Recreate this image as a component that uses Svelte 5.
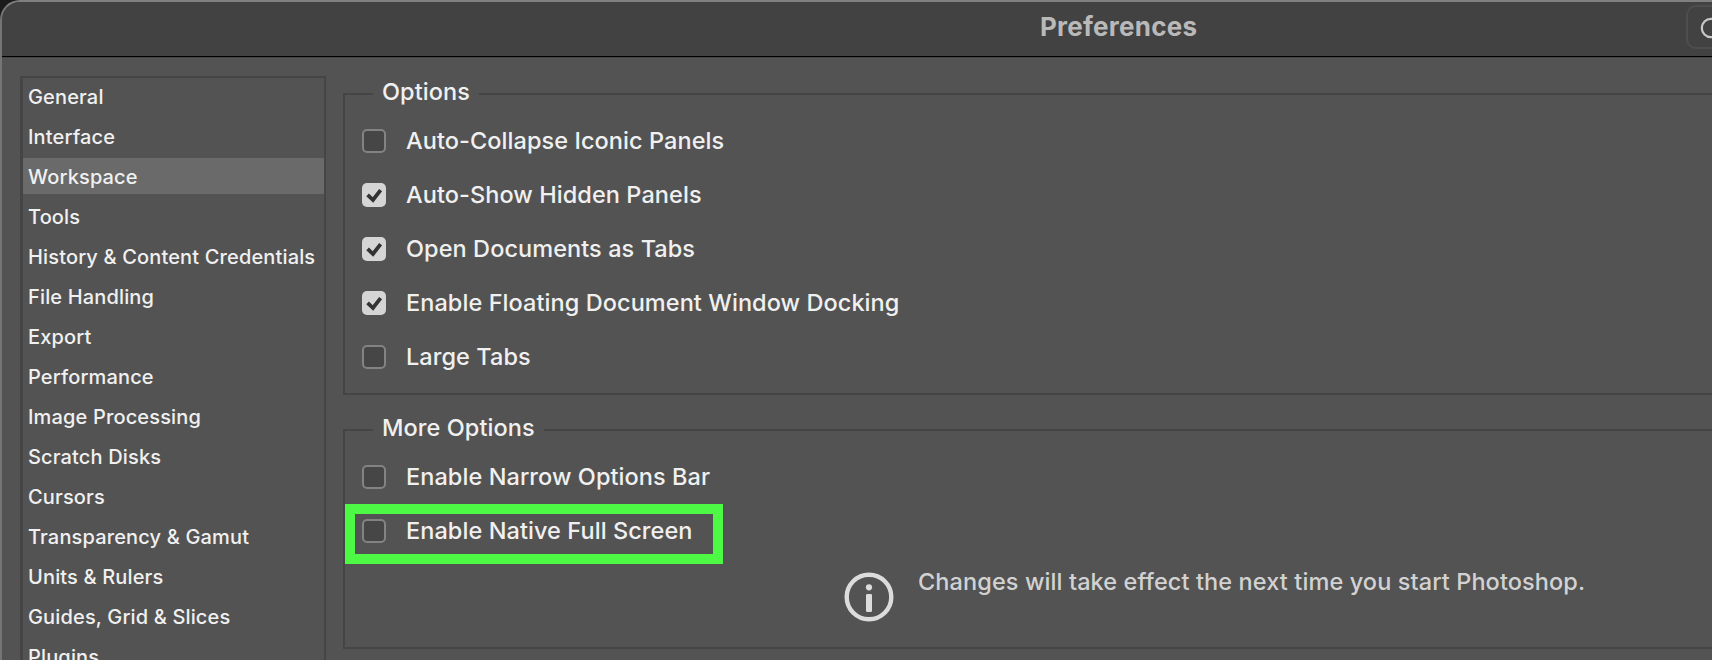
<script>
  let sections = [
    "General",
    "Interface",
    "Workspace",
    "Tools",
    "History & Content Credentials",
    "File Handling",
    "Export",
    "Performance",
    "Image Processing",
    "Scratch Disks",
    "Cursors",
    "Transparency & Gamut",
    "Units & Rulers",
    "Guides, Grid & Slices",
    "Plugins"
  ];

  let current = $state("Workspace");

  let groups = $state([
    {
      title: "Options",
      options: [
        { label: "Auto-Collapse Iconic Panels", checked: false },
        { label: "Auto-Show Hidden Panels", checked: true },
        { label: "Open Documents as Tabs", checked: true },
        { label: "Enable Floating Document Window Docking", checked: true },
        { label: "Large Tabs", checked: false }
      ]
    },
    {
      title: "More Options",
      note: "Changes will take effect the next time you start Photoshop.",
      options: [
        { label: "Enable Narrow Options Bar", checked: false },
        { label: "Enable Native Full Screen", checked: false, marked: true }
      ]
    }
  ]);
</script>

<div class="screen">
  <div class="window">
    <header>
      <h1>Preferences</h1>
      <button class="search" aria-label="Search">
        <svg width="28" height="28" viewBox="0 0 28 28">
          <circle cx="11" cy="11" r="9.2" />
          <path d="M17.5 17.5 L25 25" />
        </svg>
      </button>
    </header>

    <div class="body">
      <nav>
        {#each sections as name}
          <button class="item" class:active={current === name} onclick={() => (current = name)}>
            {name}
          </button>
        {/each}
      </nav>

      <main>
        {#each groups as group}
          <section class:more={group.note}>
            <div class="legend">
              <i class="lead"></i>
              <h2>{group.title}</h2>
              <i class="rest"></i>
            </div>
            <div class="content">
              {#each group.options as option}
                <label class:marked={option.marked}>
                  <input type="checkbox" bind:checked={option.checked} />
                  <span class="box">
                    {#if option.checked}
                      <svg width="24" height="24" viewBox="0 0 24 24">
                        <path d="M5.6 11.8 L11 17 L18.6 7.2" />
                      </svg>
                    {/if}
                  </span>
                  <span class="text">{option.label}</span>
                </label>
              {/each}
              {#if group.note}
                <div class="note">
                  <svg width="50" height="50" viewBox="0 0 50 50">
                    <circle class="ring" cx="25" cy="25" r="22.3" />
                    <circle cx="25" cy="15.3" r="3.1" />
                    <rect x="22" y="22" width="6" height="18" rx="1.2" />
                  </svg>
                  <p>{group.note}</p>
                </div>
              {/if}
            </div>
          </section>
        {/each}
      </main>
    </div>
  </div>
</div>

<style>
  :global(body) {
    background: #1b1b1b;
  }

  .screen {
    width: 1712px;
    height: 660px;
    overflow: hidden;
    background: #1b1b1b;
    font-family: Inter, "Liberation Sans", sans-serif;
    color: #f0f0f0;
  }

  /* the window runs past the right and bottom edges of the screen */
  .window {
    box-sizing: border-box;
    width: 2238px;
    height: 700px;
    border: 2px solid #757575;
    border-top-color: #808080;
    border-radius: 20px;
    background: #535353;
    overflow: hidden;
  }

  header {
    box-sizing: border-box;
    height: 56px;
    display: flex;
    background: #424242;
    border-bottom: 1px solid #454545;
    box-shadow: inset 0 -1px 0 #000;
  }

  h1 {
    flex: none;
    margin: 0;
    padding-left: 1038px;
    width: 646px;
    font-size: 26px;
    line-height: 50px;
    font-weight: 700;
    letter-spacing: 0.25px;
    color: #b9b9b9;
    white-space: nowrap;
  }

  button {
    border: 0;
    background: none;
    color: inherit;
    font-family: inherit;
    text-align: left;
  }

  .search {
    box-sizing: border-box;
    width: 200px;
    height: 44px;
    margin-top: 3px;
    padding: 8px 0 0 12px;
    border: 2px solid #4e4e4e;
    border-radius: 10px;
  }

  .search svg {
    display: block;
    fill: none;
    stroke: #c9c9c9;
    stroke-width: 2.2;
  }

  .body {
    display: flex;
    padding: 18px 0 0 18px;
  }

  nav {
    box-sizing: border-box;
    flex: none;
    width: 306px;
    height: 640px;
    display: flex;
    flex-direction: column;
    gap: 4px;
    border: 2px solid #454545;
    border-left-width: 3px;
    overflow: hidden;
  }

  .item {
    flex: none;
    height: 36px;
    padding: 1px 0 0 5px;
    font-size: 20px;
    line-height: 34px;
    font-weight: 450;
    letter-spacing: 0.15px;
    white-space: nowrap;
  }

  .item.active {
    background: #6a6a6a;
  }

  main {
    padding: 8px 0 0 17px;
    width: 1800px;
  }

  section {
    height: 311px;
    margin-bottom: 25px;
    display: flex;
    flex-direction: column;
  }

  section.more {
    height: 229px;
  }

  .legend {
    flex: none;
    height: 20px;
    display: flex;
    align-items: center;
  }

  .legend i {
    height: 2px;
    background: #454545;
  }

  .lead {
    width: 30px;
  }

  .rest {
    flex: 1;
  }

  h2 {
    margin: 0 9px;
    font-size: 23.5px;
    line-height: 30px;
    font-weight: 450;
    letter-spacing: 0.08px;
    padding-bottom: 4px;
    white-space: nowrap;
  }

  .content {
    box-sizing: border-box;
    flex: 1;
    margin-top: -9px;
    padding: 19px 0 0;
    border: 2px solid #454545;
    border-top: 0;
    display: flex;
    flex-direction: column;
  }

  label {
    box-sizing: border-box;
    flex: none;
    height: 54px;
    padding-left: 17px;
    display: flex;
    align-items: center;
  }

  input {
    display: none;
  }

  .marked {
    width: 378px;
    height: 60px;
    padding: 0 0 6px 7px;
    border: 10px solid #4df945;
  }

  .box {
    box-sizing: border-box;
    width: 24px;
    height: 24px;
    border: 2px solid #838383;
    border-radius: 5px;
    background: #464646;
  }

  input:checked + .box {
    border: 0;
    background: #d5d5d5;
  }

  .box svg {
    display: block;
    fill: none;
    stroke: #333;
    stroke-width: 3.8;
  }

  .text {
    padding-left: 20px;
    font-size: 23.5px;
    line-height: 30px;
    font-weight: 450;
    letter-spacing: 0.07px;
    white-space: nowrap;
  }

  .note {
    display: flex;
    padding-left: 499px;
    margin-top: 8px;
  }

  .note svg {
    flex: none;
    fill: #dcdcdc;
  }

  .note .ring {
    fill: none;
    stroke: #dcdcdc;
    stroke-width: 4.4;
  }

  .note p {
    margin: -5px 0 0 24px;
    font-size: 23.5px;
    line-height: 30px;
    font-weight: 450;
    letter-spacing: 0.1px;
    color: #d2d2d2;
    white-space: nowrap;
  }
</style>
